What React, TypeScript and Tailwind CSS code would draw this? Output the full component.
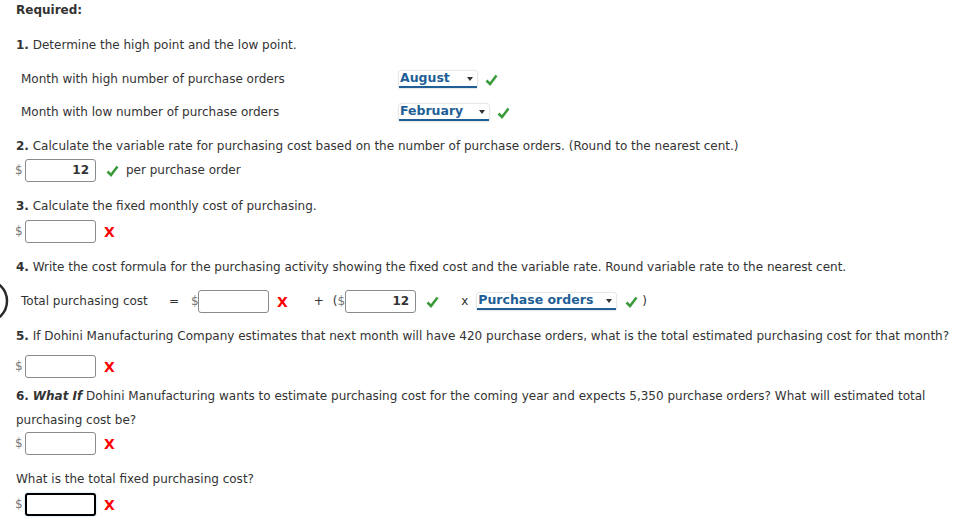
import { ReactNode } from 'react';

function Check() {
  return (
    <svg width="13" height="12" viewBox="0 0 13 12" className="block">
      <path d="M1.5 6.5 L5 10 L11.5 1.5" fill="none" stroke="#3a9a3a" strokeWidth="2.5" />
    </svg>
  );
}

function Cross() {
  return <span className="block text-[14px] font-bold leading-none text-[#ff0000]">X</span>;
}

function Input({ value, focused }: { value?: string; focused?: boolean }) {
  return (
    <div
      className={
        focused
          ? 'w-[71px] h-[23px] rounded-[3px] border-2 border-black bg-white px-1.5 text-right font-bold leading-[19px] shadow-[0_0_2px_#9ecaed]'
          : 'w-[71px] h-[23px] rounded-[3px] border border-[#8a8a8a] bg-white px-1.5 text-right font-bold leading-[21px] text-[#333]'
      }
    >
      {value}
    </div>
  );
}

function Select({ value, width }: { value: string; width: string }) {
  return (
    <div
      className={`${width} h-[17px] flex items-center justify-between border-b-2 border-[#1f5f96] rounded-t-[2px] pl-[1px] pr-1 shadow-[0_0_2px_rgba(0,0,0,0.35)] bg-white`}
    >
      <span className="font-bold text-[#1f5f96] leading-none text-[12.5px]">{value}</span>
      <span className="w-0 h-0 border-l-[3.5px] border-r-[3.5px] border-t-[4px] border-l-transparent border-r-transparent border-t-[#333]" />
    </div>
  );
}

function MoneyRow({ children, className }: { children: ReactNode; className: string }) {
  return <div className={`flex items-center h-[23px] -ml-[1px] ${className}`}>{children}</div>;
}

function Dollar() {
  return <span className="w-[10px] text-[#777]">$</span>;
}

export default function App() {
  return (
    <div className="relative overflow-hidden w-[975px] h-[522px] bg-white text-[#333] text-[12px] leading-[17px] font-['DejaVu_Sans',Verdana,sans-serif] px-4 pt-[2px]">
      <svg className="absolute left-0 top-[279px]" width="12" height="44" viewBox="0 0 12 44">
        <circle cx="-14" cy="22" r="21" fill="none" stroke="#2a2a2a" strokeWidth="2.5" />
      </svg>

      <div className="font-bold">Required:</div>

      <p className="mt-[18px]">
        <b>1.</b> Determine the high point and the low point.
      </p>

      <div className="mt-[17px] ml-[5px] flex items-center h-[17px]">
        <span className="w-[378px]">Month with high number of purchase orders</span>
        <Select value="August" width="w-[78px]" />
        <span className="ml-2">
          <Check />
        </span>
      </div>

      <div className="mt-[16px] ml-[5px] flex items-center h-[17px]">
        <span className="w-[378px]">Month with low number of purchase orders</span>
        <Select value="February" width="w-[90px]" />
        <span className="ml-2">
          <Check />
        </span>
      </div>

      <p className="mt-[17px]">
        <b>2.</b> Calculate the variable rate for purchasing cost based on the number of purchase orders. (Round to the
        nearest cent.)
      </p>

      <MoneyRow className="mt-[4px]">
        <Dollar />
        <Input value="12" />
        <span className="ml-[10px]">
          <Check />
        </span>
        <span className="ml-[7px]">per purchase order</span>
      </MoneyRow>

      <p className="mt-[16px]">
        <b>3.</b> Calculate the fixed monthly cost of purchasing.
      </p>

      <MoneyRow className="mt-[5px]">
        <Dollar />
        <Input />
        <span className="ml-[8px]">
          <Cross />
        </span>
      </MoneyRow>

      <p className="mt-[16px]">
        <b>4.</b> Write the cost formula for the purchasing activity showing the fixed cost and the variable rate. Round
        variable rate to the nearest cent.
      </p>

      <div className="mt-[14px] ml-[5px] flex items-center h-[23px]">
        <span className="w-[148px]">Total purchasing cost</span>
        <span className="w-[22px]">=</span>
        <span className="w-[7px] text-[#777]">$</span>
        <Input />
        <span className="ml-[8px]">
          <Cross />
        </span>
        <span className="ml-[26px]">+</span>
        <span className="ml-[9px]">(</span>
        <span className="text-[#777]">$</span>
        <Input value="12" />
        <span className="ml-[10px]">
          <Check />
        </span>
        <span className="ml-[22px]">x</span>
        <span className="ml-[9px]">
          <Select value="Purchase orders" width="w-[139px]" />
        </span>
        <span className="ml-[9px]">
          <Check />
        </span>
        <span className="ml-[4px]">)</span>
      </div>

      <p className="mt-[15px] whitespace-nowrap">
        <b>5.</b> If Dohini Manufacturing Company estimates that next month will have 420 purchase orders, what is the
        total estimated purchasing cost for that month?
      </p>

      <MoneyRow className="mt-[10px]">
        <Dollar />
        <Input />
        <span className="ml-[8px]">
          <Cross />
        </span>
      </MoneyRow>

      <p className="mt-[6px] leading-[24px] w-[925px]">
        <b>6.</b> <b className="italic">What If</b> Dohini Manufacturing wants to estimate purchasing cost for the
        coming year and expects 5,350 purchase orders? What will estimated total purchasing cost be?
      </p>

      <MoneyRow className="mt-0">
        <Dollar />
        <Input />
        <span className="ml-[8px]">
          <Cross />
        </span>
      </MoneyRow>

      <p className="mt-[16px]">What is the total fixed purchasing cost?</p>

      <MoneyRow className="mt-[5px]">
        <Dollar />
        <Input focused />
        <span className="ml-[8px]">
          <Cross />
        </span>
      </MoneyRow>
    </div>
  );
}
